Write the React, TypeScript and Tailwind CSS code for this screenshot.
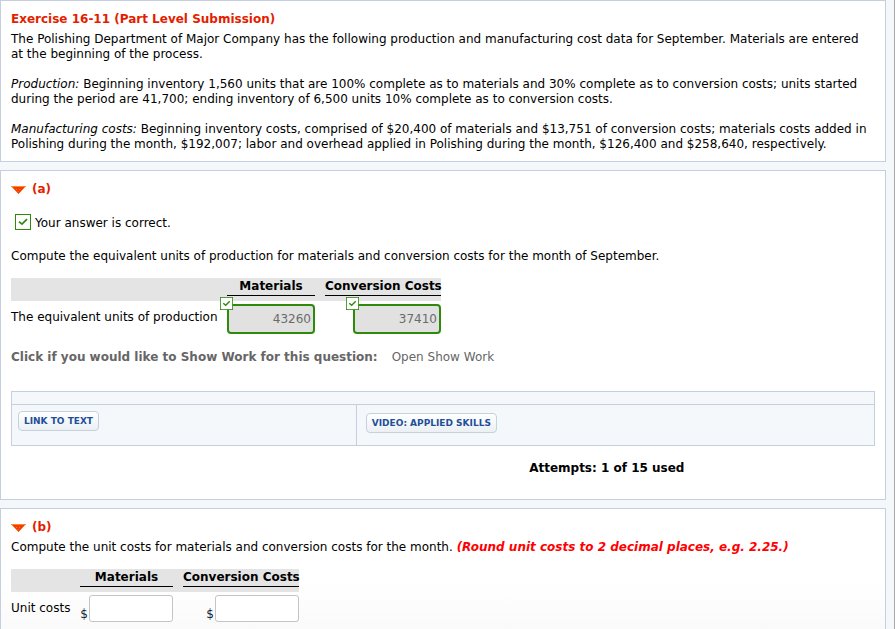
import { useState } from 'react'
import type { ReactNode } from 'react'

const ANSWERS = [
  { id: 'eq-materials', label: 'Materials', value: '43260' },
  { id: 'eq-conversion', label: 'Conversion Costs', value: '37410' },
]

const UNIT_COSTS = [
  { id: 'unit-materials', label: 'Materials' },
  { id: 'unit-conversion', label: 'Conversion Costs' },
]

function CheckMark({ className }: { className: string }) {
  return (
    <svg viewBox="0 0 16 16" className={className} aria-hidden="true">
      <rect x="0.5" y="0.5" width="15" height="15" fill="#fff" stroke="#2f8a0c" />
      <path d="M4 7.6 L7 10.2 L12 5.2" fill="none" stroke="#2f8a0c" strokeWidth="1.7" />
    </svg>
  )
}

function PartHeading({ children, open, onToggle }: { children: ReactNode; open: boolean; onToggle: () => void }) {
  return (
    <h2 className="text-[12px] leading-[15px] font-bold text-[#e31e00]">
      <button type="button" aria-expanded={open} onClick={onToggle} className="flex items-center gap-[6px]">
        <svg viewBox="0 0 15 8" className="w-[15px] h-2" aria-hidden="true">
          <path d="M0 0 H15 L7.5 8 Z" fill="#f43c00" />
          <path d="M0 0 H15 L14.2 1 H0.8 Z" fill="#ff8a1c" />
          <path d="M5 3.5 H6 M8 3.5 H9 M6.5 5.5 H7.5" stroke="#ff8a1c" strokeWidth="0.8" />
        </svg>
        <span>{children}</span>
      </button>
    </h2>
  )
}

function HeaderCells() {
  return (
    <>
      <th scope="col" className="p-0 align-top">
        <div className="h-[18px] pt-px border-b border-black">Materials</div>
      </th>
      <td className="p-0" />
      <th scope="col" className="p-0 align-top">
        <div className="h-[18px] pt-px border-b border-black whitespace-nowrap">Conversion Costs</div>
      </th>
    </>
  )
}

function GradedInput({ id, label, value }: { id: string; label: string; value: string }) {
  return (
    <div className="relative w-[88px] ml-auto">
      <input
        id={id}
        aria-label={label}
        value={value}
        readOnly
        className="block w-full h-[30px] border-2 border-[#2f8a0c] rounded bg-[#e1e1e1] px-[2px] text-right text-[12px] text-[#6b6b6b]"
      />
      <CheckMark className="absolute -left-[7px] -top-[7px] w-[13px] h-[13px]" />
    </div>
  )
}

function CostInput({ id, label }: { id: string; label: string }) {
  const [value, setValue] = useState('')
  return (
    <div className="flex justify-end items-end gap-px">
      <label htmlFor={id} className="text-[#0b1c3d]">$</label>
      <input
        id={id}
        aria-label={label}
        value={value}
        onChange={(e) => setValue(e.target.value)}
        className="w-[84px] h-[27px] border border-[#c4c4c4] rounded-[3px] bg-white px-1 text-right"
      />
    </div>
  )
}

const linkButton =
  'h-5 px-[5px] border border-[#c5d2dc] rounded bg-linear-to-b from-white to-[#ebf0f4] text-[9px] font-bold text-[#1f4f99] whitespace-nowrap'

export default function App() {
  const [openA, setOpenA] = useState(true)
  const [openB, setOpenB] = useState(true)

  return (
    <main className="min-h-screen flex flex-col gap-2 pr-2 border-r border-[#a9a9a9] bg-[#f4f8fb] font-['DejaVu_Sans',Verdana,sans-serif] text-[12px] leading-[15px] text-black">
      {/* Problem */}
      <section className="bg-white border border-[#c5cfdf] pl-[10px] pr-[14px] pt-[11px] pb-[9px]">
        <h1 className="font-bold text-[#e31e00] mb-[5px]">Exercise 16-11 (Part Level Submission)</h1>
        <p>
          The Polishing Department of Major Company has the following production and manufacturing cost data for September. Materials are entered at the beginning of the process.
        </p>
        <p className="mt-[15px]">
          <em>Production:</em> Beginning inventory 1,560 units that are 100% complete as to materials and 30% complete as to conversion costs; units started during the period are 41,700; ending inventory of 6,500 units 10% complete as to conversion costs.
        </p>
        <p className="mt-[15px]">
          <em>Manufacturing costs:</em> Beginning inventory costs, comprised of $20,400 of materials and $13,751 of conversion costs; materials costs added in Polishing during the month, $192,007; labor and overhead applied in Polishing during the month, $126,400 and $258,640, respectively.
        </p>
      </section>

      {/* Part a */}
      <section className="bg-white border border-[#c5cfdf] px-[10px] pt-[11px] pb-6">
        <PartHeading open={openA} onToggle={() => setOpenA(!openA)}>(a)</PartHeading>
        {openA && (
          <>
            <p className="flex items-center gap-1 mt-[17px] pl-1">
              <CheckMark className="w-4 h-4 mb-[2px]" />
              Your answer is correct.
            </p>
            <p className="mt-[17px]">Compute the equivalent units of production for materials and conversion costs for the month of September.</p>

            <table className="mt-[14px] table-fixed w-[430px] border-collapse">
              <colgroup>
                <col className="w-[216px]" />
                <col className="w-[88px]" />
                <col className="w-[10px]" />
                <col className="w-[116px]" />
              </colgroup>
              <thead>
                <tr className="h-[23px] bg-[#e4e4e4]">
                  <td className="p-0" />
                  <HeaderCells />
                </tr>
              </thead>
              <tbody>
                <tr>
                  <th scope="row" className="p-0 pt-[9px] text-left align-top font-normal whitespace-nowrap">The equivalent units of production</th>
                  <td className="p-0 pt-[3px]"><GradedInput {...ANSWERS[0]} /></td>
                  <td className="p-0" />
                  <td className="p-0 pt-[3px]"><GradedInput {...ANSWERS[1]} /></td>
                </tr>
              </tbody>
            </table>

            <p className="flex flex-wrap gap-[14px] mt-4 text-[#666]">
              <b>Click if you would like to Show Work for this question:</b>
              <a href="#show-work">Open Show Work</a>
            </p>

            <div className="mt-[26px] border border-[#c5cfdf] bg-[#f4f8fb]">
              <div className="h-3" />
              <div className="flex h-[41px] border-t border-[#c5cfdf]">
                <div className="w-2/5 pl-[6px] pt-[6px] border-r border-[#c5cfdf]">
                  <button type="button" className={linkButton}>LINK TO TEXT</button>
                </div>
                <div className="flex-1 pl-[9px] pt-2">
                  <button type="button" className={linkButton}>VIDEO: APPLIED SKILLS</button>
                </div>
              </div>
            </div>
            <p className="ml-auto w-3/5 pr-[18px] mt-[15px] mb-[-1px] text-center font-bold">Attempts: 1 of 15 used</p>
          </>
        )}
      </section>

      {/* Part b */}
      <section className="flex-1 bg-linear-to-b from-white from-60% to-[#fafafa] border border-b-0 border-[#c5cfdf] px-[10px] pt-[11px]">
        <PartHeading open={openB} onToggle={() => setOpenB(!openB)}>(b)</PartHeading>
        {openB && (
          <>
            <p className="mt-[5px]">
              Compute the unit costs for materials and conversion costs for the month.{' '}
              <strong className="italic text-[#f00]">(Round unit costs to 2 decimal places, e.g. 2.25.)</strong>
            </p>
            <table className="mt-[14px] table-fixed w-[288px] border-collapse">
              <colgroup>
                <col className="w-[69px]" />
                <col className="w-[93px]" />
                <col className="w-[10px]" />
                <col className="w-[116px]" />
              </colgroup>
              <thead>
                <tr className="h-[23px] bg-[#e4e4e4]">
                  <td className="p-0" />
                  <HeaderCells />
                </tr>
              </thead>
              <tbody>
                <tr>
                  <th scope="row" className="p-0 pt-[9px] text-left align-top font-normal whitespace-nowrap">Unit costs</th>
                  <td className="p-0 pt-[3px]"><CostInput {...UNIT_COSTS[0]} /></td>
                  <td className="p-0" />
                  <td className="p-0 pt-[3px]"><CostInput {...UNIT_COSTS[1]} /></td>
                </tr>
              </tbody>
            </table>
          </>
        )}
      </section>
    </main>
  )
}
